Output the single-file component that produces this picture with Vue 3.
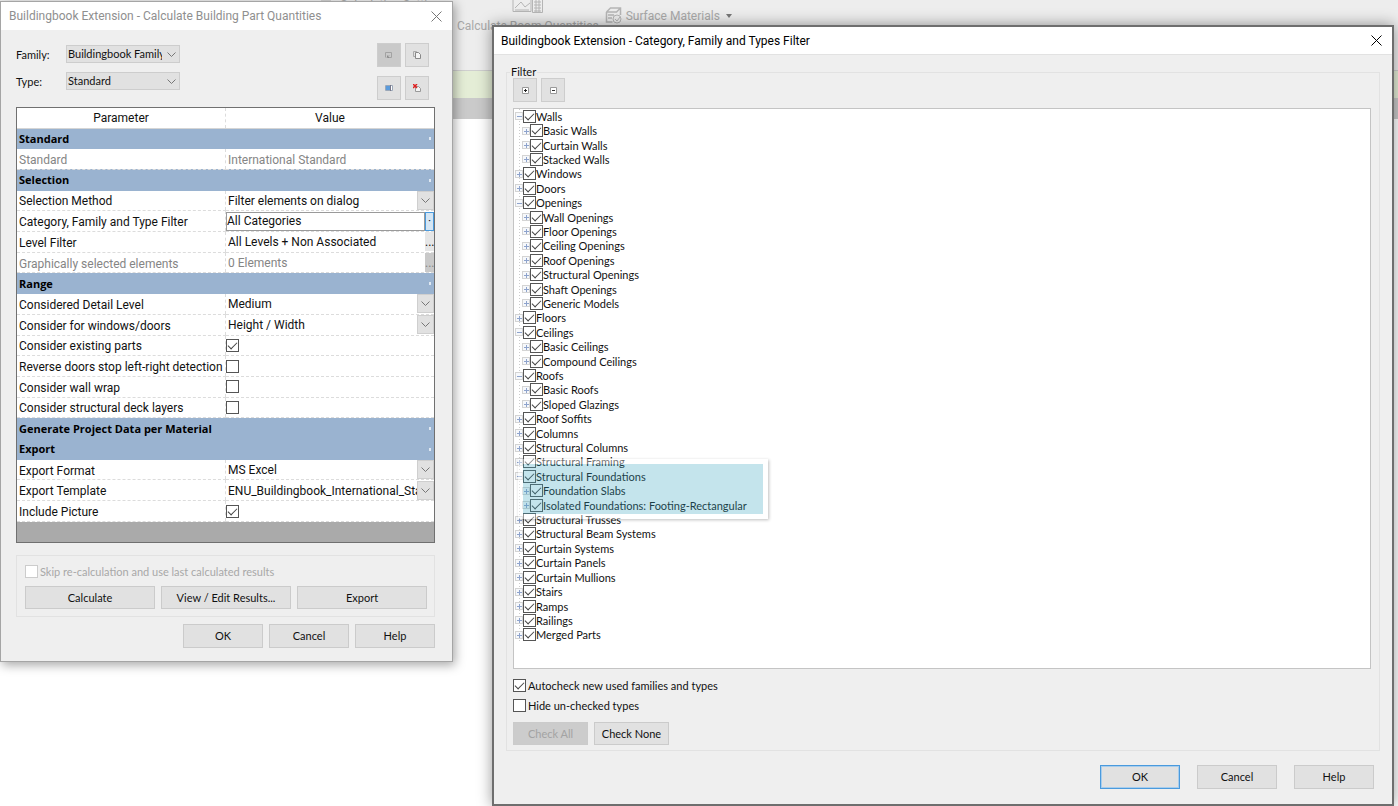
<template>
  <div class="desktop">
    <!-- Ribbon of the host application -->
    <header class="ribbon">
      <a href="#" class="ribbon-item settings">
        <svg width="16" height="12" viewBox="0 0 16 12"><path d="M1 1h10v8H1zM4 4h10v7H4z" /></svg>
        <span>Calculation Settings</span>
      </a>
      <a href="#" class="ribbon-item rooms">
        <svg width="32" height="13" viewBox="0 0 32 13">
          <path d="M1 -4V11.500H19V-4M3 8l6-6 4 5 5-4M3 10h14" />
          <path d="M20.500 -3H30.500V12.500H20.500ZM22 2h7M22 5h7M22 8h7M22 11h7M24 0v12M27 0v12" />
        </svg>
        <span>Calculate Room Quantities</span>
      </a>
      <a href="#" class="ribbon-item surface">
        <svg width="17" height="17" viewBox="0 0 17 17">
          <path d="M1.500 5l4-4h10v7M1.500 5h10l4-4M1.500 5v10h6M3 8h6M3 11h4" stroke-width="1.500" />
          <circle cx="12" cy="12" r="4" fill="#ededed" /><path d="M10 12l2 2 3-4" />
        </svg>
        <span>Surface Materials</span>
        <svg class="caret" width="6" height="4" viewBox="0 0 6 4"><path d="M0 0h6L3 4z" /></svg>
      </a>
    </header>
    <div class="band green"></div>
    <div class="band grey"></div>

    <!-- Quantities dialog -->
    <section class="window quantities">
      <div class="title-bar">
        <h1>Buildingbook Extension - Calculate Building Part Quantities</h1>
        <button class="close" aria-label="Close">
          <svg width="11" height="11" viewBox="0 0 11 11"><path d="M.5.5l10 10M10.500.5l-10 10" /></svg>
        </button>
      </div>
      <div class="body">
        <div class="head">
          <div class="pickers">
            <label for="family">Family:</label>
            <div class="combo">
              <select id="family"><option>Buildingbook Family</option></select>
              <svg width="9" height="5" viewBox="0 0 9 5"><path d="M.5.5l4 4 4-4" /></svg>
            </div>
            <label for="type">Type:</label>
            <div class="combo">
              <select id="type"><option>Standard</option></select>
              <svg width="9" height="5" viewBox="0 0 9 5"><path d="M.5.5l4 4 4-4" /></svg>
            </div>
          </div>
          <div class="tools">
            <button class="tool" disabled aria-label="Save">
              <svg width="8" height="8" viewBox="0 0 8 8">
                <path d="M.5 1.500h6v5h-2M.5 1.500v5" stroke="#a2a2a2" />
                <path d="M2 6.500l2-2M2.500 4.500v2h2" stroke="#8c8c8c" />
              </svg>
            </button>
            <button class="tool" aria-label="Duplicate">
              <svg width="8" height="8" viewBox="0 0 8 8">
                <path d="M.5 .5h3v5h-3z" stroke="#aaa" />
                <path d="M2.500 1.500h3l2 2v4h-5z" stroke="#888" fill="#f4f4f4" />
              </svg>
            </button>
            <button class="tool" aria-label="Rename">
              <svg width="8" height="8" viewBox="0 0 8 8">
                <path d="M.5 1.500h7v5h-7z" stroke="#9aa7b8" fill="#fff" />
                <path d="M1 2h4v4H1z" fill="#5a9bdc" stroke="none" />
                <path d="M5.500 1v6" stroke="#778" />
              </svg>
            </button>
            <button class="tool" aria-label="Delete">
              <svg width="8" height="8" viewBox="0 0 8 8">
                <path d="M2.500 2.500h3l2 2v3h-5z" stroke="#999" fill="#f4f4f4" />
                <path d="M0 0l4 4M4 0L0 4" stroke="#e02020" stroke-width="1.500" />
              </svg>
            </button>
          </div>
        </div>

        <div class="grid-box">
          <table class="params">
            <thead>
              <tr><th>Parameter</th><th>Value</th></tr>
            </thead>
            <tbody>
              <template v-for="row in params" :key="row.id">
                <tr v-if="row.kind === 'group'" class="group-row">
                  <th colspan="2"><div class="group-cell">{{ row.label }}<i></i></div></th>
                </tr>
                <tr v-else :class="{ muted: row.muted }">
                  <td><label :for="row.id">{{ row.label }}</label></td>
                  <td class="value">
                    <input v-if="row.kind === 'check'" :id="row.id" v-model="row.value" type="checkbox" class="check" />
                    <div v-else-if="row.kind === 'select'" class="combo">
                      <select :id="row.id"><option>{{ row.value }}</option></select>
                      <svg width="9" height="5" viewBox="0 0 9 5"><path d="M.5.5l4 4 4-4" /></svg>
                    </div>
                    <div v-else class="entry" :class="{ active: row.active }">
                      <input :id="row.id" v-model="row.value" type="text" :disabled="row.muted" />
                      <button v-if="row.kind === 'browse'" :disabled="row.muted" :aria-label="'Browse ' + row.label">
                        {{ row.active ? '·' : '...' }}
                      </button>
                    </div>
                  </td>
                </tr>
              </template>
            </tbody>
          </table>
          <div class="filler"></div>
        </div>

        <div class="run-box">
          <label class="check-label off">
            <input type="checkbox" class="check" disabled />Skip re-calculation and use last calculated results
          </label>
          <div class="run-buttons">
            <button class="btn">Calculate</button>
            <button class="btn">View / Edit Results...</button>
            <button class="btn">Export</button>
          </div>
        </div>
        <div class="footer">
          <button class="btn">OK</button>
          <button class="btn">Cancel</button>
          <button class="btn">Help</button>
        </div>
      </div>
    </section>

    <!-- Filter dialog -->
    <section class="window filter">
      <div class="title-bar">
        <h2>Buildingbook Extension - Category, Family and Types Filter</h2>
        <button class="close" aria-label="Close">
          <svg width="11" height="11" viewBox="0 0 11 11"><path d="M.5.5l10 10M10.500.5l-10 10" /></svg>
        </button>
      </div>
      <div class="body">
        <fieldset>
          <legend>Filter</legend>
          <div class="tree-tools">
            <button class="tool" aria-label="Expand all">
              <svg width="7" height="7" viewBox="0 0 7 7"><path d="M.5.5h6v6h-6z" stroke="#999" fill="#fff" /><path d="M2 3.500h3M3.500 2v3" stroke="#222" /></svg>
            </button>
            <button class="tool" aria-label="Collapse all">
              <svg width="7" height="7" viewBox="0 0 7 7"><path d="M.5.5h6v6h-6z" stroke="#999" fill="#fff" /><path d="M2 3.500h3" stroke="#333" /></svg>
            </button>
          </div>
          <div class="tree">
            <ul>
              <li v-for="node in nodes" :key="node.name" :class="{ child: node.child }">
                <button class="expander" :class="{ open: node.open }" :aria-label="'Toggle ' + node.name"></button>
                <label><input v-model="node.checked" type="checkbox" class="check" />{{ node.name }}</label>
              </li>
            </ul>
            <div class="highlight"></div>
          </div>
          <label class="check-label">
            <input v-model="autocheck" type="checkbox" class="check" />Autocheck new used families and types
          </label>
          <label class="check-label">
            <input v-model="hideUnchecked" type="checkbox" class="check" />Hide un-checked types
          </label>
          <div class="check-buttons">
            <button class="btn" disabled>Check All</button>
            <button class="btn">Check None</button>
          </div>
        </fieldset>
        <div class="footer">
          <button class="btn primary">OK</button>
          <button class="btn">Cancel</button>
          <button class="btn">Help</button>
        </div>
      </div>
    </section>
  </div>
</template>

<script setup>
import { ref } from 'vue';

const autocheck = ref(true);
const hideUnchecked = ref(false);

// Rows of the parameter table
const params = ref([
  { id: 'g-standard', kind: 'group', label: 'Standard' },
  { id: 'standard', kind: 'text', label: 'Standard', value: 'International Standard', muted: true },
  { id: 'g-selection', kind: 'group', label: 'Selection' },
  { id: 'method', kind: 'select', label: 'Selection Method', value: 'Filter elements on dialog' },
  { id: 'category', kind: 'browse', label: 'Category, Family and Type Filter', value: 'All Categories', active: true },
  { id: 'level', kind: 'browse', label: 'Level Filter', value: 'All Levels + Non Associated' },
  { id: 'graphical', kind: 'browse', label: 'Graphically selected elements', value: '0 Elements', muted: true },
  { id: 'g-range', kind: 'group', label: 'Range' },
  { id: 'detail', kind: 'select', label: 'Considered Detail Level', value: 'Medium' },
  { id: 'openings', kind: 'select', label: 'Consider for windows/doors', value: 'Height / Width' },
  { id: 'existing', kind: 'check', label: 'Consider existing parts', value: true },
  { id: 'reverse', kind: 'check', label: 'Reverse doors stop left-right detection', value: false },
  { id: 'wrap', kind: 'check', label: 'Consider wall wrap', value: false },
  { id: 'deck', kind: 'check', label: 'Consider structural deck layers', value: false },
  { id: 'g-material', kind: 'group', label: 'Generate Project Data per Material' },
  { id: 'g-export', kind: 'group', label: 'Export' },
  { id: 'format', kind: 'select', label: 'Export Format', value: 'MS Excel' },
  { id: 'template', kind: 'select', label: 'Export Template', value: 'ENU_Buildingbook_International_Standard' },
  { id: 'picture', kind: 'check', label: 'Include Picture', value: true },
]);

// Category tree, with the families below the open categories
const categories = [
  ['Walls', ['Basic Walls', 'Curtain Walls', 'Stacked Walls']],
  ['Windows'],
  ['Doors'],
  ['Openings', ['Wall Openings', 'Floor Openings', 'Ceiling Openings', 'Roof Openings', 'Structural Openings', 'Shaft Openings', 'Generic Models']],
  ['Floors'],
  ['Ceilings', ['Basic Ceilings', 'Compound Ceilings']],
  ['Roofs', ['Basic Roofs', 'Sloped Glazings']],
  ['Roof Soffits'],
  ['Columns'],
  ['Structural Columns'],
  ['Structural Framing'],
  ['Structural Foundations', ['Foundation Slabs', 'Isolated Foundations: Footing-Rectangular']],
  ['Structural Trusses'],
  ['Structural Beam Systems'],
  ['Curtain Systems'],
  ['Curtain Panels'],
  ['Curtain Mullions'],
  ['Stairs'],
  ['Ramps'],
  ['Railings'],
  ['Merged Parts'],
];

const nodes = ref(
  categories.flatMap(([name, families = []]) => [
    { name, open: families.length > 0, checked: true },
    ...families.map((family) => ({ name: family, child: true, checked: true })),
  ])
);
</script>

<style>
body {
  margin: 0;
}
</style>

<style scoped>
.desktop {
  position: relative;
  min-height: 100vh;
  overflow: hidden;
  background: #fff;
  color: #111;
  font: 11px/13px Lato, 'Noto Sans', sans-serif;
}

.desktop *,
.desktop *::before,
.desktop *::after {
  box-sizing: border-box;
}

button,
input,
select {
  margin: 0;
  padding: 0;
  border: 0;
  border-radius: 0;
  background: none;
  color: inherit;
  font: inherit;
}

svg {
  fill: none;
  stroke: #777;
}

/* Ribbon */
.ribbon {
  display: flex;
  align-items: flex-start;
  height: 71px;
  padding-left: 320px;
  background: #ededed;
  border-bottom: 1px solid #cfcfcf;
}

.ribbon-item {
  display: flex;
  align-items: center;
  color: #a9a9a9;
  font: 12px/14px Roboto, sans-serif;
  text-decoration: none;
  white-space: nowrap;
}

.ribbon-item svg {
  stroke: #b5b5b5;
}

.settings {
  align-items: flex-start;
  gap: 4px;
  width: 137px;
  line-height: 10px;
}

.rooms {
  flex-direction: column;
  gap: 6px;
}

.surface {
  gap: 4px;
  padding: 7px 0 0 6px;
}

.ribbon-item .caret {
  margin-left: 2px;
  fill: #777;
  stroke: none;
}

.band.green {
  height: 27px;
  background: #e4edd6;
}

.band.grey {
  height: 21px;
  background: #cacaca;
}

/* Windows */
.window {
  position: absolute;
  background: #efefef;
}

.quantities {
  top: 1px;
  left: 0;
  width: 453px;
  border: 1px solid #a5a5a5;
  box-shadow: 2px 3px 10px rgba(0, 0, 0, 0.35);
}

.filter {
  top: 25px;
  left: 492px;
  right: 4px;
  border: 2px solid #6e6e6e;
  box-shadow: 0 0 14px rgba(0, 0, 0, 0.4);
}

.title-bar {
  display: flex;
  align-items: center;
  justify-content: space-between;
  height: 28px;
  padding: 0 10px 0 8px;
  background: #fff;
}

.title-bar h1,
.title-bar h2 {
  margin: 0;
  color: #000;
  font: 12px/16px Roboto, sans-serif;
}

.quantities h1 {
  color: #8f8f8f;
}

.filter .title-bar {
  height: 27px;
  padding: 0 10px 0 7px;
}

.close {
  display: flex;
}

.filter .close svg {
  stroke: #000;
}

/* Buttons */
.btn {
  height: 23px;
  padding-bottom: 1px;
  border: 1px solid #cbcbcb;
  background: #e1e1e1;
}

.btn:disabled {
  background: #cccccc;
  color: #a3a3a3;
}

.btn.primary {
  border-color: #4a9add;
  box-shadow: inset 0 0 0 1px #a8cdec;
}

.tool {
  display: flex;
  align-items: center;
  justify-content: center;
  width: 24px;
  height: 24px;
  border: 1px solid #cdcdcd;
  background: #e1e1e1;
}

.tool:disabled {
  background: #c9c9c9;
}

.footer {
  display: flex;
  justify-content: flex-end;
}

.footer .btn {
  width: 80px;
  height: 24px;
}

/* Tick boxes */
.check {
  appearance: none;
  display: grid;
  flex: none;
  width: 13px;
  height: 13px;
  border: 1px solid #555;
  background: #fff;
}

.check:disabled {
  border-color: #ccc;
}

.check:checked::after {
  content: '';
  width: 9px;
  height: 5px;
  margin: 2px 1px;
  border: solid #444;
  border-width: 0 0 1px 1px;
  transform: rotate(-45deg);
}

.check-label {
  display: flex;
  align-items: center;
  gap: 2px;
}

.check-label.off {
  color: #a8a8a8;
}

/* Drop-downs */
.combo {
  display: grid;
  grid-template-columns: 1fr 17px;
  align-items: center;
}

.combo select {
  appearance: none;
  grid-area: 1 / 1 / 2 / 3;
  width: 100%;
  padding-right: 17px;
  overflow: hidden;
}

.combo svg {
  grid-area: 1 / 2;
  justify-self: center;
  pointer-events: none;
}

/* Quantities dialog */
.quantities .body {
  padding: 13px 17px 13px 15px;
}

.head {
  display: flex;
  justify-content: space-between;
  padding-right: 6px;
}

.pickers {
  display: grid;
  grid-template-columns: 50px 114px;
  grid-template-rows: 18px 18px;
  gap: 9px 0;
  align-items: center;
  margin-top: 2px;
}

.pickers select {
  height: 18px;
  padding: 0 17px 2px 1px;
  border: 1px solid #cdcdcd;
  background: #e1e1e1;
}

.tools {
  display: grid;
  grid-template-columns: 24px 24px;
  gap: 9px 4px;
}

.grid-box {
  margin-top: 7px;
  border: 1px solid #707070;
}

.params {
  width: 100%;
  height: 414px;
  border-collapse: collapse;
  table-layout: fixed;
  background: #fff;
  font: 12px/14px Roboto, sans-serif;
}

.params th,
.params td {
  height: 20px;
  padding: 0;
  border-bottom: 1px dashed #dcdcdc;
  text-align: left;
  white-space: nowrap;
}

.params thead th {
  border-bottom: 1px solid #d5d5d5;
  font-weight: 400;
  text-align: center;
}

.params thead th + th,
.params .value {
  border-left: 1px dashed #dcdcdc;
}

.params td label {
  display: block;
  padding: 2px 0 0 2px;
}

.params .group-row th {
  border-bottom: 1px solid #9ab3d0;
  background: #9ab3d0;
  color: #000;
  font: 700 11px/14px 'Open Sans', sans-serif;
}

.group-cell {
  display: flex;
  align-items: center;
  justify-content: space-between;
  padding: 1px 3px 0 2px;
}

.group-cell i {
  width: 2px;
  height: 3px;
  background: #dfe8f2;
}

.params .muted {
  color: #858585;
}

.params .combo select {
  height: 19px;
  padding-top: 1px;
  padding-left: 2px;
}

.params .combo svg {
  width: 17px;
  height: 19px;
  padding: 7px 4px;
  background: #e1e1e1;
  outline: 1px solid #cfcfcf;
  outline-offset: -1px;
}

.entry {
  display: flex;
  height: 19px;
}

.entry input {
  flex: 1;
  min-width: 0;
  padding: 1px 0 0 2px;
}

.entry button {
  width: 9px;
  overflow: hidden;
  background: #e6e6e6;
}

.entry button:disabled {
  background: #c9c9c9;
}

.entry.active input {
  padding: 0;
  border: 1px solid #9a9a9a;
}

.entry.active button {
  border: 1px solid #4a9add;
  background: #d5e6f4;
}

.filler {
  height: 20px;
  background: #aaa;
}

.run-box {
  margin-top: 12px;
  padding: 9px 7px 7px 8px;
  border: 1px solid #e2e2e2;
}

.run-buttons {
  display: flex;
  gap: 6px;
  margin-top: 8px;
}

.run-buttons .btn {
  flex: 1;
}

.quantities .footer {
  gap: 6px;
  margin-top: 7px;
}

/* Filter dialog */
.filter .body {
  padding: 11px 12px 15px;
  border-top: 1px solid #e2e2e2;
}

fieldset {
  margin: 0;
  padding: 0 8px 5px 6px;
  border: 1px solid #e2e2e2;
}

legend {
  margin-left: -3px;
  padding: 0 1px;
  line-height: 12px;
}

.tree-tools {
  display: flex;
  gap: 4px;
}

.tree {
  position: relative;
  margin: 6px 0 10px;
  padding: 0 1px 26px;
  border: 1px solid #c4c4c4;
  background: #fff;
}

.tree ul {
  display: flex;
  flex-direction: column;
  height: 533px;
  margin: 0;
  padding: 0;
  list-style: none;
  background: repeating-linear-gradient(#ccc 0 1px, transparent 1px 3px) 4px 0 / 1px 100% no-repeat;
}

.tree li {
  display: flex;
  flex: 1;
  align-items: center;
  min-height: 0;
}

.tree li.child {
  padding-left: 7px;
}

.tree label {
  display: flex;
  align-items: center;
}

.expander {
  position: relative;
  width: 8px;
  height: 8px;
  border: 1px solid #d4d4d4;
  background: #f6f8fb;
}

.expander::before,
.expander::after {
  content: '';
  position: absolute;
  top: 3px;
  left: 1px;
  width: 5px;
  height: 1px;
  background: #8ea3cc;
}

.expander::after {
  top: 1px;
  left: 3px;
  width: 1px;
  height: 5px;
}

.expander.open::after {
  display: none;
}

/* Marks the foundation rows */
.highlight {
  position: absolute;
  top: 350px;
  left: 4px;
  width: 250px;
  height: 60px;
  border: 5px solid rgba(255, 255, 255, 0.4);
  background: rgba(60, 165, 192, 0.3) padding-box;
  box-shadow: 1px 1px 3px rgba(0, 0, 0, 0.25);
  pointer-events: none;
}

.filter .check-label + .check-label {
  margin-top: 7px;
}

.check-buttons {
  display: flex;
  gap: 6px;
  margin-top: 10px;
}

.check-buttons .btn {
  width: 75px;
}

.filter .footer {
  gap: 17px;
  margin-top: 14px;
  padding-right: 6px;
}
</style>
